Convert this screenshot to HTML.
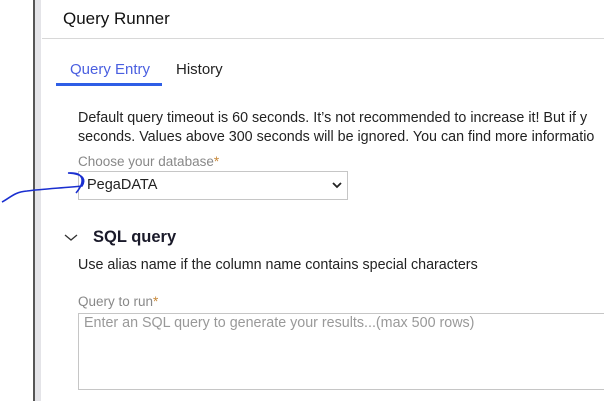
<!DOCTYPE html>
<html><head><style>
body{margin:0;width:604px;height:401px;overflow:hidden;background:#fff;font-family:"Liberation Sans",sans-serif;position:relative;color:#1f1f1f}
.a{position:absolute;white-space:nowrap}
</style></head><body>
<div class="a" style="left:33px;top:0;width:2px;height:401px;background:#555"></div>
<div class="a" style="left:35px;top:0;width:6px;height:401px;background:#e4e4e8"></div>
<div class="a" style="left:42px;top:38px;width:562px;height:1px;background:#d8d8d8"></div>
<div class="a" style="left:63px;top:9px;font-size:17px;color:#111">Query Runner</div>
<div class="a" style="left:70px;top:61px;font-size:15px;color:#4a5fe0">Query Entry</div>
<div class="a" style="left:176px;top:61px;font-size:15px;color:#222">History</div>
<div class="a" style="left:56px;top:83px;width:106px;height:3px;background:#2e5ee6"></div>
<div class="a" style="left:78px;top:109px;font-size:14.3px;line-height:19px;color:#222">Default query timeout is 60 seconds. It’s not recommended to increase it! But if y<br>seconds. Values above 300 seconds will be ignored. You can find more informatio</div>
<div class="a" style="left:78px;top:154px;font-size:13.5px;color:#888">Choose your database<span style="color:#c8893a">*</span></div>
<div class="a" style="left:78px;top:171px;width:270px;height:29px;border:1px solid #c6c6c6;box-sizing:border-box"></div>
<div class="a" style="left:87px;top:177px;font-size:14.5px;color:#222">PegaDATA</div>
<svg class="a" style="left:331px;top:181px" width="12" height="8"><path d="M2 2l4 4 4-4" stroke="#222" stroke-width="1.8" fill="none"/></svg>
<svg class="a" style="left:0;top:162px" width="100" height="45"><path d="M2 40c8-4 12-10 25-11 15-2 35-3 55-5 3-5 4-12-14-13 16-1 18 8 8 20" stroke="#1a2fd0" stroke-width="1.6" fill="none"/></svg>
<svg class="a" style="left:64px;top:233px" width="14" height="10"><path d="M1 2l6 5 6-5" stroke="#333" stroke-width="1.3" fill="none"/></svg>
<div class="a" style="left:93px;top:228px;font-size:16.5px;font-weight:bold;color:#1a1a2a">SQL query</div>
<div class="a" style="left:78px;top:257px;font-size:14.3px;color:#222">Use alias name if the column name contains special characters</div>
<div class="a" style="left:78px;top:294px;font-size:13.5px;color:#888">Query to run<span style="color:#c8893a">*</span></div>
<div class="a" style="left:78px;top:313px;width:540px;height:77px;border:1px solid #c6c6c6;box-sizing:border-box"></div>
<div class="a" style="left:84px;top:315px;font-size:14.3px;color:#999">Enter an SQL query to generate your results...(max 500 rows)</div>
</body></html>
